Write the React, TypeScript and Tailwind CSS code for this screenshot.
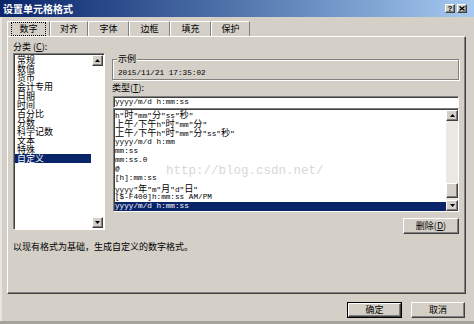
import React from "react";

const CJK = "font-['Noto_Sans_CJK_SC','Noto_Sans',sans-serif]";
const MONO = "font-['Liberation_Mono','DejaVu_Sans_Mono',monospace]";
const RAISED =
  "bg-[#d4d0c8] border border-t-white border-l-white border-r-[#404040] border-b-[#404040] shadow-[inset_-1px_-1px_0_#808080]";
const SUNKEN =
  "bg-white border border-t-[#808080] border-l-[#808080] border-r-white border-b-white shadow-[inset_1px_1px_0_#404040]";

const TABS = [
  { label: "数字", w: "w-[43px]" },
  { label: "对齐", w: "w-[38px]" },
  { label: "字体", w: "w-[41px]" },
  { label: "边框", w: "w-[41px]" },
  { label: "填充", w: "w-[41px]" },
  { label: "保护", w: "w-[39px]" },
];

const CATEGORIES = ["常规", "数值", "货币", "会计专用", "日期", "时间", "百分比", "分数", "科学记数", "文本", "特殊", "自定义"];

const FORMATS = [
  'h"时"mm"分"ss"秒"',
  '上午/下午h"时"mm"分"',
  '上午/下午h"时"mm"分"ss"秒"',
  "yyyy/m/d h:mm",
  "mm:ss",
  "mm:ss.0",
  "@",
  "[h]:mm:ss",
  'yyyy"年"m"月"d"日"',
  "[$-F400]h:mm:ss AM/PM",
  "yyyy/m/d h:mm:ss",
];

// ascii in mono, CJK runs at double width like SimSun
function Fmt({ s }: { s: string }) {
  const parts = s.split(/([\u3000-\u9fff\uff00-\uffef]+)/);
  return (
    <>
      {parts.map((p, i) =>
        i % 2 ? (
          <span key={i} className={`text-[9.2px] ${CJK}`}>
            {p}
          </span>
        ) : (
          <span key={i}>{p}</span>
        )
      )}
    </>
  );
}

function Arrow({ down, w = "w-[11px]" }: { down?: boolean; w?: string }) {
  return (
    <div className={`${RAISED} ${w} h-[11px] flex items-center justify-center shrink-0`}>
      <svg width="5" height="3" viewBox="0 0 5 3">
        {down ? <polygon points="0,0 5,0 2.5,3" fill="#000" /> : <polygon points="2.5,0 5,3 0,3" fill="#000" />}
      </svg>
    </div>
  );
}

export default function App() {
  return (
    <div
      className={`w-[474px] h-[324px] overflow-hidden bg-[#d4d0c8] border-b-[3px] border-b-[#a5a29b] shadow-[inset_2px_0_0_#e8e6e1] flex flex-col text-black ${CJK}`}
    >
      {/* title bar */}
      <div className="h-[17px] shrink-0 bg-gradient-to-r from-[#0a246a] to-[#a6caf0] flex items-center justify-between pl-[3px] pr-[7px]">
        <span className="text-[10px] leading-[10px] font-bold text-white">设置单元格格式</span>
        <div className="flex gap-[2px]">
          <div className={`${RAISED} w-[10px] h-[9px] flex items-center justify-center`}>
            <span className="font-['Liberation_Sans',sans-serif] font-bold text-[8px] leading-[8px]">?</span>
          </div>
          <div className={`${RAISED} w-[10px] h-[9px] flex items-center justify-center`}>
            <svg width="6" height="5" viewBox="0 0 6 5">
              <path d="M0.5 0.5 L5.5 4.5 M5.5 0.5 L0.5 4.5" stroke="#000" strokeWidth="1.3" />
            </svg>
          </div>
        </div>
      </div>

      {/* tabs */}
      <div className="mt-[4px] h-[15px] shrink-0 flex pl-[7px]">
        {TABS.map((t, i) => (
          <div
            key={t.label}
            className={`${t.w} border-t border-l border-white border-r border-r-[#808080] flex items-center justify-center text-[9px] leading-[10px]`}
          >
            {i === 0 ? (
              <span className="border border-dotted border-black px-[7px] py-[1px]">{t.label}</span>
            ) : (
              t.label
            )}
          </div>
        ))}
      </div>

      {/* panel */}
      <div className="ml-[7px] w-[459px] h-[258px] shrink-0 border border-t-white border-l-white border-r-[#404040] border-b-[#404040] shadow-[inset_-1px_-1px_0_#808080] pl-[5px] pr-[6px] flex flex-col text-[9px]">
        <div className="flex gap-[7px]">
          {/* category list */}
          <div className="w-[92px] flex flex-col">
            <div className="mt-[5px] leading-[10px]">
              分类 (<span className="underline">C</span>):
            </div>
            <div className={`${SUNKEN} mt-[1px] h-[177px] flex pl-[1px] pt-[1px] pr-[1px]`}>
              <div className="flex-1 flex flex-col">
                {CATEGORIES.map((c, i) => (
                  <div
                    key={c}
                    className={`h-[9px] leading-[9px] pl-[2px] text-[9px] whitespace-nowrap ${
                      i === CATEGORIES.length - 1 ? "bg-[#0a246a] text-white" : ""
                    }`}
                  >
                    {c}
                  </div>
                ))}
              </div>
              <div className="w-[11px] ml-[1px] flex flex-col justify-between pb-[1px]">
                <Arrow />
                <Arrow down />
              </div>
            </div>
          </div>

          {/* right column */}
          <div className="w-[347px] flex flex-col">
            <div className="relative mt-[22px] h-[21px] border border-[#808080] shadow-[inset_1px_1px_0_#fff,1px_1px_0_#fff]">
              <span className="absolute left-[4px] -top-[6px] px-[1px] bg-[#d4d0c8] leading-[10px]">示例</span>
              <div className={`pl-[5px] pt-[9px] text-[7.7px] leading-[9px] whitespace-pre ${MONO}`}>2015/11/21 17:35:02</div>
            </div>
            <div className="mt-[3px] leading-[10px]">
              类型(<span className="underline">T</span>):
            </div>
            <div className={`${SUNKEN} mt-[3px] ml-[1px] h-[12px] pl-[1px] text-[7.7px] leading-[10px] whitespace-pre ${MONO}`}>
              yyyy/m/d h:mm:ss
            </div>
            <div className={`${SUNKEN} relative ml-[1px] h-[104px] flex pt-[1px] pl-[1px]`}>
              <div className={`flex-1 flex flex-col text-[7.7px] ${MONO}`}>
                {FORMATS.map((f, i) => (
                  <div
                    key={f}
                    className={`h-[9.2px] leading-[9.2px] whitespace-pre ${
                      i === FORMATS.length - 1 ? "bg-[#0a246a] text-white" : ""
                    }`}
                  >
                    <Fmt s={f} />
                  </div>
                ))}
              </div>
              <div className="w-[12px] flex flex-col bg-[#ebe9e4] pb-[0px]">
                <Arrow w="w-[12px]" />
                <div className="flex-1" />
                <div className={`${RAISED} h-[15px] mb-[2px]`} />
                <Arrow down w="w-[12px]" />
              </div>
              <span className={`absolute left-[52px] top-[56px] text-[12.5px] leading-[12px] text-[#d8d8d8] whitespace-nowrap pointer-events-none font-['Liberation_Mono',monospace]`}>
                http://blog.csdn.net/
              </span>
            </div>
            <div className={`${RAISED} mt-[6px] self-end w-[56px] h-[16px] flex items-center justify-center leading-[10px]`}>
              删除(<span className="underline">D</span>)
            </div>
          </div>
        </div>
        <div className="mt-[8px] leading-[10px]">以现有格式为基础，生成自定义的数字格式。</div>
      </div>

      {/* buttons */}
      <div className="mt-[8px] flex justify-end gap-[9px] pr-[9px] text-[9px]">
        <div className="w-[55px] h-[16px] border border-black">
          <div className={`${RAISED} w-full h-full flex items-center justify-center leading-[10px]`}>确定</div>
        </div>
        <div className={`${RAISED} w-[54px] h-[16px] flex items-center justify-center leading-[10px]`}>取消</div>
      </div>
    </div>
  );
}
